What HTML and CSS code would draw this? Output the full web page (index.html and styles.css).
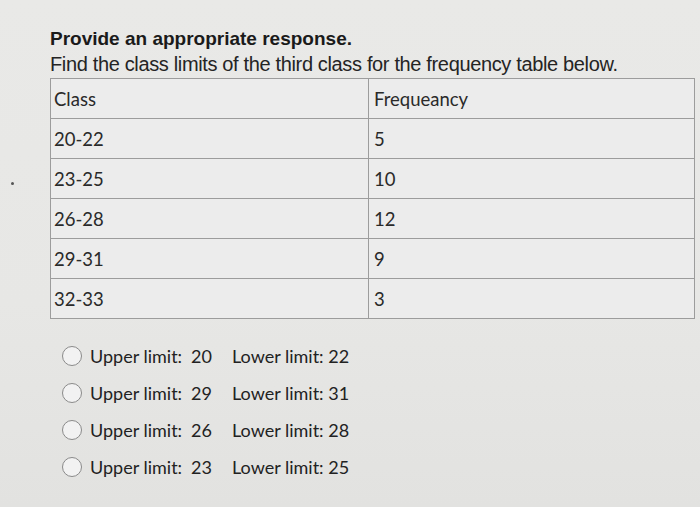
FILE: index.html
```html
<!DOCTYPE html>
<html>
<head>
<meta charset="utf-8">
<link rel="stylesheet" href="styles.css">
</head>
<body>
<div class="page">
  <span class="speck"></span>
  <h1 class="title">Provide an appropriate response.</h1>
  <p class="question">Find the class limits of the third class for the frequency table below.</p>
  <table class="freq">
    <tr><td class="c1">Class</td><td class="c2">Frequeancy</td></tr>
    <tr><td class="c1">20-22</td><td class="c2">5</td></tr>
    <tr><td class="c1">23-25</td><td class="c2">10</td></tr>
    <tr><td class="c1">26-28</td><td class="c2">12</td></tr>
    <tr><td class="c1">29-31</td><td class="c2">9</td></tr>
    <tr><td class="c1">32-33</td><td class="c2">3</td></tr>
  </table>
  <ul class="options">
    <li class="opt"><span class="radio"></span><span class="up">Upper limit:</span><span class="num">20</span><span class="low">Lower limit: 22</span></li>
    <li class="opt"><span class="radio"></span><span class="up">Upper limit:</span><span class="num">29</span><span class="low">Lower limit: 31</span></li>
    <li class="opt"><span class="radio"></span><span class="up">Upper limit:</span><span class="num">26</span><span class="low">Lower limit: 28</span></li>
    <li class="opt"><span class="radio"></span><span class="up">Upper limit:</span><span class="num">23</span><span class="low">Lower limit: 25</span></li>
  </ul>
</div>
</body>
</html>
```
FILE: styles.css
```css
html, body {
  margin: 0;
  padding: 0;
}
body {
  width: 700px;
  height: 507px;
  overflow: hidden;
  background: linear-gradient(180deg, #e9e9e7 0%, #e7e7e5 60%, #e2e2e0 100%);
  color: #222;
  font-family: "Liberation Sans", Arial, sans-serif;
}
.page {
  position: relative;
  padding: 28px 0 0 50px;
}
.speck {
  position: absolute;
  left: 11px;
  top: 182px;
  width: 3px;
  height: 3px;
  border-radius: 50%;
  background: #555;
}
.title {
  margin: 0;
  font-size: 19px;
  line-height: 22px;
  font-weight: bold;
  color: #1a1a1a;
}
.question {
  margin: 3px 0 0 0;
  font-size: 20px;
  line-height: 23px;
  letter-spacing: -0.35px;
  color: #242424;
}
.freq {
  margin-top: 2px;
  width: 645px;
  border-collapse: collapse;
  font-family: Lato, "Liberation Sans", sans-serif;
  font-size: 18.5px;
  color: #2a2a2a;
  background: #ececec;
}
.freq td {
  border: 1.5px solid #9c9c9c;
  height: 40px;
  padding: 0 0 0 3px;
  vertical-align: middle;
  box-sizing: border-box;
}
.freq td.c1 {
  width: 318px;
}
.freq td.c2 {
  padding-left: 5px;
}
.options {
  list-style: none;
  margin: 18px 0 0 12px;
  padding: 0;
  font-family: Lato, "Liberation Sans", sans-serif;
  font-size: 18px;
  color: #222;
}
.opt {
  display: flex;
  align-items: center;
  height: 37px;
}
.radio {
  width: 20px;
  height: 20px;
  border: 1.5px solid #8a8a8a;
  border-radius: 50%;
  background: #f2f2f2;
  box-sizing: border-box;
  margin-right: 8px;
}
.up {
  width: 101px;
}
.num {
  width: 41px;
}
```
